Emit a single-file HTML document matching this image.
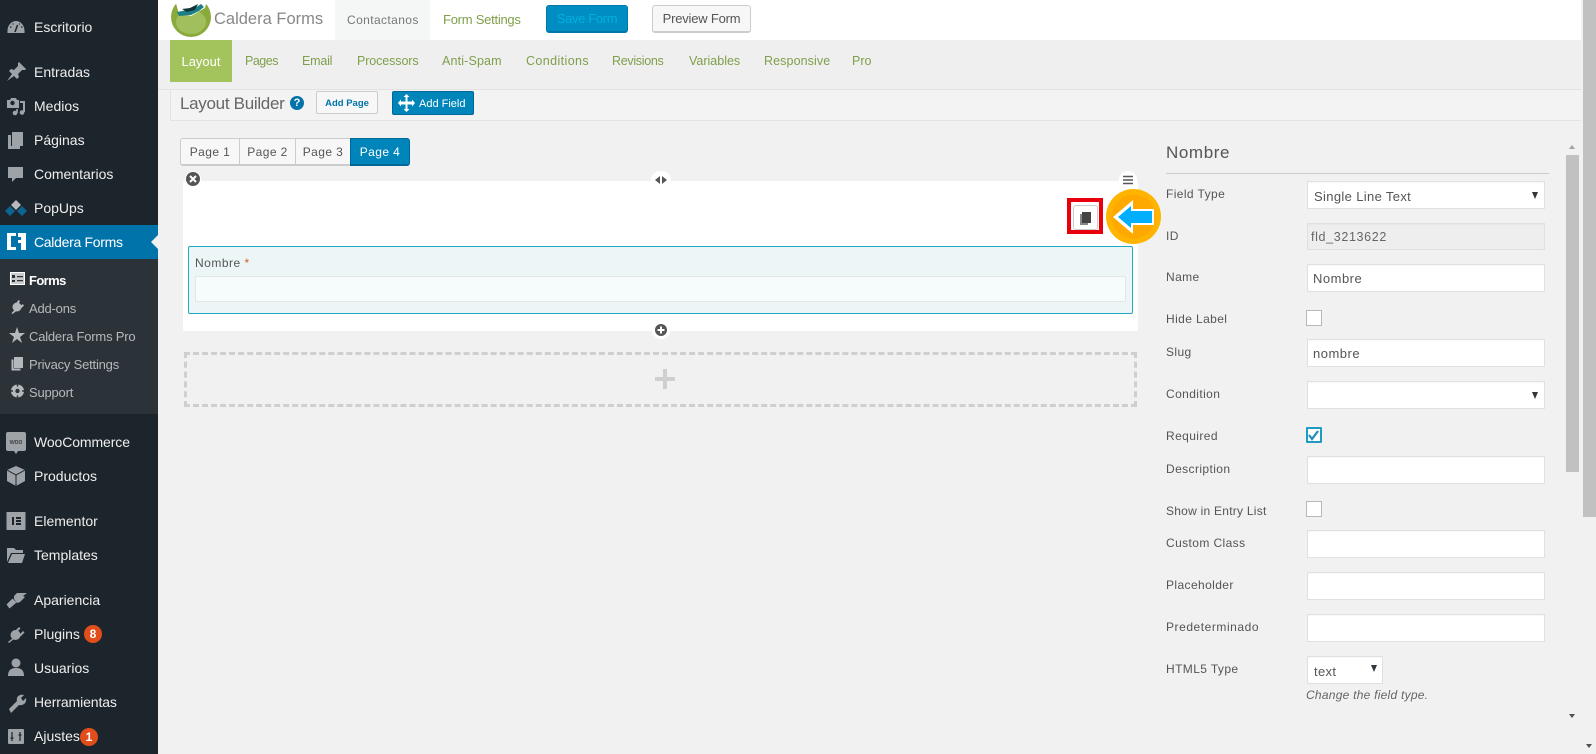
<!DOCTYPE html>
<html lang="es"><head><meta charset="utf-8"><title>Caldera Forms</title>
<style>
html,body{margin:0;padding:0;width:1596px;height:754px;overflow:hidden;background:#f1f1f1}
body{position:relative;font-family:"Liberation Sans",sans-serif;font-size:13px;color:#555}
div,span,svg{position:absolute;box-sizing:border-box}
.t{white-space:nowrap;line-height:20px;height:20px}
.m{left:34px;color:#eee;font-size:14px;letter-spacing:0}
.s{left:29px;color:#b4b9be;font-size:13px;letter-spacing:-.2px}
.n{color:#7f9f4b;font-size:12.5px;top:51px}
.l{left:1166px;color:#555;font-size:12px;letter-spacing:.4px;margin-top:1px}
.f{left:1307px;width:238px;height:28px;background:#fff;border:1px solid #e0e0e0;box-shadow:inset 0 1px 1px rgba(0,0,0,.03);color:#555;font-size:13px;line-height:26px;padding-left:6px;letter-spacing:.35px;white-space:nowrap}
.c{left:1306px;width:16px;height:16px;background:#fff;border:1px solid #b4b9be}
.a{width:0;height:0;border-left:3.500px solid transparent;border-right:3.500px solid transparent;border-top:7px solid #32373c}
.p{top:138px;height:28px;background:#f7f7f7;border:1px solid #ccc;border-bottom-width:2px;color:#555;font-size:12px;line-height:27px;text-align:center;letter-spacing:.4px}
</style></head><body>

<div style="left:0;top:0;width:158px;height:754px;background:#1d252c"></div>
<div style="left:0;top:225px;width:158px;height:34px;background:#0073aa"></div>
<div style="left:0;top:259px;width:158px;height:155px;background:#2c3338"></div>
<div style="left:151px;top:235px;width:0;height:0;border:7px solid transparent;border-right-color:#f1f1f1;border-left:0"></div>

<span class="t m" style="top:17px">Escritorio</span>
<span class="t m" style="top:62px">Entradas</span>
<span class="t m" style="top:96px">Medios</span>
<span class="t m" style="top:130px">Páginas</span>
<span class="t m" style="top:164px">Comentarios</span>
<span class="t m" style="top:198px">PopUps</span>
<span class="t m" style="top:232px;color:#fff;letter-spacing:-.3px">Caldera Forms</span>
<span class="t s" style="top:271px;color:#fff;font-weight:bold;letter-spacing:-.6px">Forms</span>
<span class="t s" style="top:299px">Add-ons</span>
<span class="t s" style="top:327px">Caldera Forms Pro</span>
<span class="t s" style="top:355px">Privacy Settings</span>
<span class="t s" style="top:383px">Support</span>
<span class="t m" style="top:432px;letter-spacing:-.1px">WooCommerce</span>
<span class="t m" style="top:466px">Productos</span>
<span class="t m" style="top:511px">Elementor</span>
<span class="t m" style="top:545px">Templates</span>
<span class="t m" style="top:590px">Apariencia</span>
<span class="t m" style="top:624px">Plugins</span>
<span class="t m" style="top:658px">Usuarios</span>
<span class="t m" style="top:692px;letter-spacing:-.1px">Herramientas</span>
<span class="t m" style="top:726px">Ajustes</span>
<div style="left:84px;top:625px;width:18px;height:18px;border-radius:9px;background:#e14d1b;color:#fff;font-size:12px;font-weight:bold;line-height:18px;text-align:center">8</div>
<div style="left:80px;top:728px;width:18px;height:18px;border-radius:9px;background:#e14d1b;color:#fff;font-size:12px;font-weight:bold;line-height:18px;text-align:center">1</div>

<!-- Sidebar icons -->
<svg style="left:0;top:0" width="34" height="754" viewBox="0 0 34 754">
<g fill="#9ea3a8">
<path d="M7.500 33a8.500 9 0 0 1 0-2c0-6 4-10 8.500-10s8.500 4 8.500 10a8.500 9 0 0 1 0 2z"/>
<path d="M15 32l2.500-7" stroke="#1d252c" stroke-width="1.500"/>
<path d="M10 27h1.500M21 27h1.500M12.500 24h1M19 24h1" stroke="#1d252c" stroke-width="1.200"/>
<path d="M7 81l5-7-3-3 2-2 3 1 4-4 0-3 1-1 7 7-1 1-3 0-4 4 1 3-2 2-3-3z"/>
<path d="M7 100h3l1-2h5l1 2h2v8H7z"/><circle cx="12.500" cy="103" r="2.200" fill="#1d252c"/>
<circle cx="15" cy="113" r="2.300"/><circle cx="22" cy="112.500" r="2.300"/><path d="M16.200 113v-4h1.600v4zM23 112v-9h-3v-2h5v11z"/>
<path d="M12 132h11v14H12z"/><path d="M8 135h3v11h9v3H8z"/>
<path d="M8 167h15v11h-7l-4 4v-4H8z"/>
<path d="M16 200l5 5-5 5-5-5z" fill="#b9bcbf"/>
<path d="M10 206l5 5-5 5-5-5zM22 206l5 5-5 5-5-5z" fill="#0e6490"/>
<path d="M7 233h9v3h-5v11h5v3H7zM18 233h8v17h-5v-7h-3v-3h3v-3h-3z" fill="#fff"/>
<path d="M10 272h15v13H10z" fill="#fff"/><path d="M11 273h13v11H11z" fill="#2c3338" opacity=".25"/><path d="M12 275h3v3h-3zM12 280h3v2h-3zM17 276h6v1.200h-6zM17 280h6v1.200h-6z" fill="#2c3338"/>
<g transform="translate(11.500 300)" fill="#b4b9be" stroke="none"><circle cx="5.500" cy="7" r="4.500"/><path d="M4 4l3-4 1.500 1-2 4zM7 8l4-4 1.500 1.500-4 4zM3 10L0 13l1 1 4-3z"/></g>
<path d="M17 327l2 6h6l-5 4 2 6-5-4-5 4 2-6-5-4h6z" fill="#b4b9be"/>
<path d="M14 357h9v11h-9z" fill="#b4b9be"/><path d="M11.500 359.500h2v9h7v2h-9z" fill="#b4b9be"/>
<circle cx="17.500" cy="391" r="6.500" fill="#b4b9be"/><circle cx="17.500" cy="391" r="2.200" fill="#2c3338"/>
<path d="M17.500 384.500v2M17.500 395.500v2M11 391h2M22 391h2" stroke="#2c3338" stroke-width="1.500"/>
<rect x="6" y="432" width="20" height="19" rx="2"/><path d="M14 451h4l-2 3z"/>
<text x="16" y="444" font-size="7" text-anchor="middle" fill="#1d252c" font-family="Liberation Sans,sans-serif">woo</text>
<path d="M16 466l9 4v11l-9 5-9-5v-11z"/><path d="M7 470l9 5 9-5M16 475v11" fill="none" stroke="#1d252c"/>
<rect x="6.500" y="512" width="19" height="18"/><path d="M12 517h2v8h-2zM16 517h5v2h-5zM16 520h5v2h-5zM16 523h5v2h-5z" fill="#1d252c"/>
<path d="M7 548h7l2 2h7v3H11l-4 9zM12 554h13l-3 9H8z"/>
<path d="M14 596l3-3h10l-4 3 2 1-5 5-3 1-3-4z"/><path d="M12.500 598.500l4 4-7 6-3-4z"/>
<g><circle cx="15.500" cy="635" r="5"/><path d="M15 631l4-4 1.500 1.500-4 4zM19 635l4-4 1.500 1.500-4 4zM13 638l-5 4 1 1 5-4z"/></g>
<circle cx="16" cy="663" r="4.500"/><path d="M8 676c0-6 3-8 8-8s8 2 8 8z"/>
<path d="M9 709l8-8c-1-4 2-7 7-6l-3 3 2 3 3-3c1 5-3 8-7 7l-8 8z"/>
<rect x="8" y="729" width="16" height="15" rx="1"/><path d="M12 732v9M20 732v9M10.500 738h3M18.500 735h3" stroke="#1d252c" stroke-width="1.200"/>
</g>
</svg>

<!-- Header -->
<div style="left:158px;top:0;width:1423px;height:40px;background:#fff"></div>
<div style="left:335px;top:0;width:95px;height:40px;background:#f5f7f7"></div>
<svg style="left:168px;top:0" width="46" height="40" viewBox="0 0 46 40">
<circle cx="23" cy="17" r="20" fill="#8aaa3c"/>
<ellipse cx="23" cy="22" rx="15" ry="12" fill="#a2bf5e"/>
<path d="M7 0h32l-2 8-14 8-12-2z" fill="#fff"/>
<path d="M9 12l10-2 8-2 6-4 3 3-5 4-8 4-12 1z" fill="#1c7f84"/>
<path d="M14 9l8-1 8-4-3 6-8 2z" fill="#12343a"/>
</svg>
<span class="t" style="left:214px;top:9px;font-size:16.500px;color:#888;letter-spacing:0">Caldera Forms</span>
<span class="t" style="left:347px;top:10px;font-size:12px;color:#777;letter-spacing:.4px">Contactanos</span>
<span class="t" style="left:443px;top:10px;font-size:13px;color:#7f9f4b;letter-spacing:-.25px">Form Settings</span>
<div style="left:546px;top:5px;width:82px;height:28px;background:#008ec2;border:1px solid #0079a8;border-bottom-width:2px;border-radius:3px;color:#00b0e0;font-size:13px;line-height:25px;text-align:center;letter-spacing:-.35px">Save Form</div>
<div style="left:652px;top:5px;width:99px;height:28px;background:#f7f7f7;border:1px solid #ccc;border-bottom-width:2px;border-radius:3px;color:#555;font-size:13px;line-height:25px;text-align:center;letter-spacing:-.2px">Preview Form</div>

<!-- Nav -->
<div style="left:158px;top:40px;width:1423px;height:50px;background:#efefef;border-bottom:1px solid #e2e2e2"></div>
<div style="left:170px;top:40px;width:62px;height:42px;background:#a3c35c;color:#fff;font-size:13px;line-height:43px;text-align:center;letter-spacing:0">Layout</div>
<span class="t n" style="left:245px;letter-spacing:-.5px">Pages</span>
<span class="t n" style="left:302px;letter-spacing:-.2px">Email</span>
<span class="t n" style="left:357px;letter-spacing:-.1px">Processors</span>
<span class="t n" style="left:442px;letter-spacing:.15px">Anti-Spam</span>
<span class="t n" style="left:526px;letter-spacing:.4px">Conditions</span>
<span class="t n" style="left:612px;letter-spacing:-.3px">Revisions</span>
<span class="t n" style="left:689px">Variables</span>
<span class="t n" style="left:764px;letter-spacing:.1px">Responsive</span>
<span class="t n" style="left:852px">Pro</span>

<!-- Layout builder bar -->
<div style="left:170px;top:90px;width:1411px;height:31px;background:#f3f3f3;border:1px solid #e3e3e3;border-top:0;border-right:0"></div>
<span class="t" style="left:180px;top:94px;font-size:17px;color:#666;letter-spacing:-.3px">Layout Builder</span>
<div style="left:290px;top:96px;width:14px;height:14px;border-radius:7px;background:#0073aa;color:#fff;font-size:11px;font-weight:bold;line-height:14px;text-align:center">?</div>
<div style="left:316px;top:91px;width:62px;height:23px;background:#f7f7f7;border:1px solid #ccc;border-radius:2px;color:#0073aa;font-size:9.500px;font-weight:bold;line-height:23px;text-align:center">Add Page</div>
<div style="left:392px;top:91px;width:82px;height:24px;background:#0085ba;border:1px solid #006799;border-radius:2px"></div>
<svg style="left:397px;top:93px" width="19" height="20" viewBox="0 0 19 20"><path d="M9.500 1l3 3h-2v4.500H15v-2l3 3.500-3 3.500v-2h-4.500V16h2l-3 3-3-3h2v-4.500H4v2L1 10l3-3.500v2h4.500V4h-2z" fill="#fff"/></svg>
<span class="t" style="left:419px;top:94px;font-size:11px;color:#fff;letter-spacing:0">Add Field</span>

<!-- Page tabs -->
<div class="p" style="left:180px;width:60px;border-radius:3px 0 0 3px">Page 1</div>
<div class="p" style="left:239px;width:57px">Page 2</div>
<div class="p" style="left:295px;width:56px">Page 3</div>
<div class="p" style="left:350px;width:60px;background:#0085ba;border-color:#006799;color:#fff;border-radius:0 3px 3px 0">Page 4</div>

<!-- Row -->
<div style="left:183px;top:181px;width:955px;height:150px;background:#fff"></div>
<div style="left:188px;top:246px;width:945px;height:68px;background:#ecf6f6;border:1px solid #22a9bd;border-radius:2px"></div>
<span class="t" style="left:195px;top:253px;font-size:12px;color:#555;letter-spacing:.5px">Nombre <span style="position:static;color:#e4572e">*</span></span>
<div style="left:195px;top:276px;width:931px;height:26px;background:#f6fbfb;border:1px solid #e2e6e6"></div>

<div style="left:185px;top:171px;width:16px;height:16px;border-radius:8px;background:#fff"></div>
<div style="left:186px;top:172px;width:14px;height:14px;border-radius:7px;background:#555"></div>
<svg style="left:186px;top:172px" width="14" height="14"><path d="M4 4l6 6M10 4l-6 6" stroke="#fff" stroke-width="2"/></svg>
<div style="left:651px;top:171px;width:20px;height:18px;border-radius:9px;background:#fff"></div>
<svg style="left:654px;top:175px" width="14" height="10"><path d="M6 1v8L1 5zM8 1v8l5-4z" fill="#555"/></svg>
<div style="left:1119px;top:171px;width:18px;height:18px;border-radius:9px;background:#fff"></div>
<svg style="left:1122px;top:175px" width="12" height="10"><path d="M1 1.500h10M1 5h10M1 8.500h10" stroke="#555" stroke-width="1.500"/></svg>
<div style="left:652px;top:321px;width:18px;height:18px;border-radius:9px;background:#fff"></div>
<div style="left:655px;top:324px;width:12px;height:12px;border-radius:6px;background:#555"></div>
<svg style="left:655px;top:324px" width="12" height="12"><path d="M6 2.500v7M2.500 6h7" stroke="#fff" stroke-width="2"/></svg>

<!-- Copy icon + annotations -->
<div style="left:1073px;top:205px;width:25px;height:25px;background:#fff;border:1px solid #ccc;border-radius:3px"></div>
<svg style="left:1078px;top:210px" width="16" height="16" viewBox="0 0 16 16"><path d="M2 4h8v11H2z" fill="#888"/><path d="M4 2h9v11H4z" fill="#444"/></svg>
<div style="left:1067px;top:198px;width:36px;height:36px;border:4px solid #e9000d"></div>
<div style="left:1106px;top:189px;width:55px;height:55px;border-radius:50%;background:#ffb400"></div>
<svg style="left:1106px;top:189px" width="55" height="55" viewBox="0 0 55 55">
<circle cx="27.500" cy="27.500" r="22" fill="#ffa800"/>
<path d="M7 28L27 11v9h21v16H27v9z" fill="#fff"/>
<path d="M12 28l13-11v5h21v12H25v5z" fill="#00aeff"/>
</svg>

<!-- Drop zone -->
<div style="left:184px;top:352px;width:953px;height:55px;border:3px dashed #cfcfcf"></div>
<svg style="left:655px;top:369px" width="20" height="20"><path d="M8 0h4v8h8v4h-8v8H8v-8H0V8h8z" fill="#cfcfcf"/></svg>

<!-- Right panel -->
<span class="t" style="left:1166px;top:143px;font-size:17px;color:#555;letter-spacing:.6px">Nombre</span>
<div style="left:1166px;top:173px;width:383px;height:1px;background:#ccc"></div>

<span class="t l" style="top:183px">Field Type</span>
<div class="f" style="top:181px;padding-top:2px">Single Line Text</div>
<div class="a" style="left:1532px;top:192px"></div>
<span class="t l" style="top:225px">ID</span>
<div class="f" style="top:223px;height:27px;background:#eee;color:#666;padding-left:3px;font-size:12.500px;letter-spacing:.65px">fld_3213622</div>
<span class="t l" style="top:266px">Name</span>
<div class="f" style="top:264px;padding-left:5px;padding-top:1px;letter-spacing:.5px">Nombre</div>
<span class="t l" style="top:308px">Hide Label</span>
<div class="c" style="top:310px"></div>
<span class="t l" style="top:341px">Slug</span>
<div class="f" style="top:339px;padding-left:5px;padding-top:1px;letter-spacing:.5px">nombre</div>
<span class="t l" style="top:383px">Condition</span>
<div class="f" style="top:381px"></div>
<div class="a" style="left:1532px;top:392px"></div>
<span class="t l" style="top:425px">Required</span>
<div class="c" style="top:427px;border:2px solid #1e9bc4;border-radius:1px"></div>
<svg style="left:1307px;top:429px" width="14" height="13"><path d="M2 6l3 4 6-8" fill="none" stroke="#1e8cbe" stroke-width="2.200"/></svg>
<span class="t l" style="top:458px">Description</span>
<div class="f" style="top:456px"></div>
<span class="t l" style="top:500px;letter-spacing:.25px">Show in Entry List</span>
<div class="c" style="top:501px"></div>
<span class="t l" style="top:532px">Custom Class</span>
<div class="f" style="top:530px"></div>
<span class="t l" style="top:574px">Placeholder</span>
<div class="f" style="top:572px"></div>
<span class="t l" style="top:616px;letter-spacing:.55px">Predeterminado</span>
<div class="f" style="top:614px"></div>
<span class="t l" style="top:658px">HTML5 Type</span>
<div class="f" style="top:656px;width:76px;padding-top:2px">text</div>
<div class="a" style="left:1371px;top:665px"></div>
<span class="t" style="left:1306px;top:685px;font-size:12px;font-style:italic;color:#666;letter-spacing:.25px">Change the field type.</span>

<!-- Scrollbars -->
<div style="left:1566px;top:155px;width:13px;height:317px;background:#c1c1c1"></div>
<div style="left:1569px;top:145px;width:0;height:0;border-left:3.500px solid transparent;border-right:3.500px solid transparent;border-bottom:4px solid #a3a3a3"></div>
<div style="left:1569px;top:714px;width:0;height:0;border-left:3.500px solid transparent;border-right:3.500px solid transparent;border-top:4px solid #505050"></div>
<div style="left:1583px;top:0;width:13px;height:517px;background:#c1c1c1"></div>
<div style="left:1586px;top:744px;width:0;height:0;border-left:3.500px solid transparent;border-right:3.500px solid transparent;border-top:4px solid #505050"></div>
</body></html>
